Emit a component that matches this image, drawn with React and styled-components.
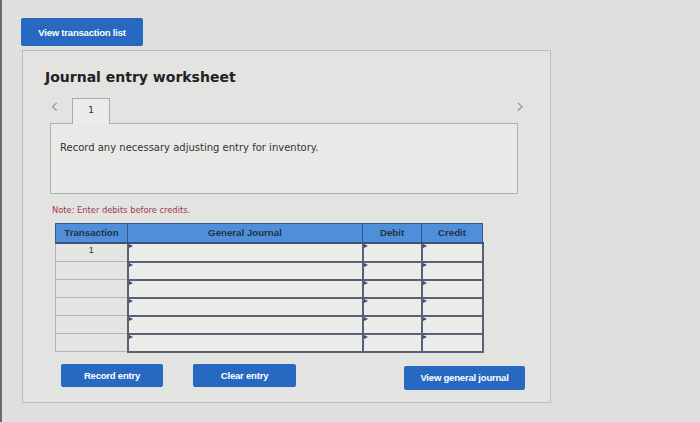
import React from 'react';
import styled, { createGlobalStyle } from 'styled-components';

const GlobalStyle = createGlobalStyle`
  html, body {
    margin: 0;
    padding: 0;
    background: #dfdfdd;
  }
  #root {
    width: 700px;
    height: 422px;
    overflow: hidden;
  }
`;

const rows = ['1', '', '', '', '', ''];

const App = () => (
  <>
    <GlobalStyle />
    <Page>
      <BlueButton $w={122} $h={28}>View transaction list</BlueButton>

      <Panel>
        <Title>Journal entry worksheet</Title>

        <TabRow>
          <TabLeft>
            <Chevron>&lsaquo;</Chevron>
            <Tab>1</Tab>
          </TabLeft>
          <Chevron>&rsaquo;</Chevron>
        </TabRow>

        <ContentBox>Record any necessary adjusting entry for inventory.</ContentBox>

        <Note>Note: Enter debits before credits.</Note>

        <Table>
          <colgroup>
            <col style={{ width: 72 }} />
            <col style={{ width: 235 }} />
            <col style={{ width: 59 }} />
            <col style={{ width: 61 }} />
          </colgroup>
          <thead>
            <tr>
              <Th>Transaction</Th>
              <Th>General Journal</Th>
              <Th>Debit</Th>
              <Th>Credit</Th>
            </tr>
          </thead>
          <tbody>
            {rows.map((r, i) => (
              <tr key={i}>
                <TransCell>{r}</TransCell>
                <InputCell><Marker /></InputCell>
                <InputCell><Marker /></InputCell>
                <InputCell><Marker /></InputCell>
              </tr>
            ))}
          </tbody>
        </Table>

        <ButtonRow>
          <BlueButton $w={102} $h={23}>Record entry</BlueButton>
          <BlueButton $w={103} $h={23}>Clear entry</BlueButton>
          <Spacer />
          <BlueButton $w={121} $h={24} $drop={2}>View general journal</BlueButton>
        </ButtonRow>
      </Panel>
    </Page>
  </>
);

const Page = styled.div`
  padding: 18px 0 0 19px;
  display: flex;
  flex-direction: column;
  align-items: flex-start;
  border-left: 2px solid #6a6a6a;
  height: 422px;
  box-sizing: border-box;
`;

const BlueButton = styled.div`
  width: ${p => p.$w}px;
  height: ${p => p.$h}px;
  margin-top: ${p => p.$drop || 0}px;
  background: #2769c1;
  border-radius: 2px;
  color: #fff;
  font-family: "Liberation Sans", Arial, sans-serif;
  font-weight: bold;
  font-size: 9.5px;
  letter-spacing: -0.2px;
  display: flex;
  align-items: center;
  justify-content: center;
  flex-shrink: 0;
`;

const Panel = styled.div`
  margin-top: 4px;
  margin-left: 1px;
  width: 529px;
  height: 353px;
  box-sizing: border-box;
  border: 1px solid #bdbdba;
  background: #e3e3e1;
  padding: 17px 0 0 27px;
  display: flex;
  flex-direction: column;
`;

const Title = styled.h1`
  margin: 0 0 0 -5px;
  font-family: "DejaVu Sans", Verdana, sans-serif;
  font-weight: bold;
  font-size: 14px;
  line-height: 18px;
  color: #222;
`;

const TabRow = styled.div`
  margin-top: 12px;
  width: 474px;
  display: flex;
  justify-content: space-between;
  align-items: flex-start;
`;

const TabLeft = styled.div`
  display: flex;
  align-items: flex-start;
  gap: 14px;
`;

const Chevron = styled.span`
  font-family: "DejaVu Sans", sans-serif;
  font-size: 22px;
  font-weight: 300;
  line-height: 14px;
  color: #8a8a8a;
  padding-top: 1px;
  width: 8px;
  text-align: center;
`;

const Tab = styled.div`
  width: 38px;
  height: 26px;
  margin-bottom: -1px;
  border: 1px solid #aaa;
  border-bottom: none;
  background: #ebebe9;
  font-family: "DejaVu Sans", sans-serif;
  font-size: 9px;
  color: #333;
  text-align: center;
  padding-top: 6px;
  box-sizing: border-box;
  position: relative;
  z-index: 1;
`;

const ContentBox = styled.div`
  width: 468px;
  height: 71px;
  box-sizing: border-box;
  border: 1px solid #b2b2b0;
  background: #e9e9e7;
  padding: 18px 0 0 9px;
  font-family: "DejaVu Sans", Verdana, sans-serif;
  font-size: 10px;
  color: #333;
`;

const Note = styled.div`
  margin: 11px 0 0 2px;
  font-family: "DejaVu Sans", Verdana, sans-serif;
  font-size: 8.3px;
  line-height: 10px;
  color: #a3384a;
`;

const Table = styled.table`
  margin: 8px 0 0 5px;
  width: 427px;
  border-collapse: collapse;
  table-layout: fixed;
`;

const Th = styled.th`
  height: 16px;
  padding: 0 0 2px;
  background: #4f8ed8;
  border: 1px solid #34598a;
  border-bottom: 2px solid #3c5478;
  font-family: "Liberation Sans", Arial, sans-serif;
  font-size: 9.7px;
  font-weight: bold;
  color: #23334a;
  vertical-align: middle;
`;

const TransCell = styled.td`
  height: 16px;
  padding: 1px 0 0;
  border: 1px solid #b3b3b1;
  background: #e4e4e2;
  font-family: "Liberation Sans", Arial, sans-serif;
  font-size: 9px;
  line-height: 10px;
  color: #333;
  text-align: center;
  vertical-align: top;
`;

const InputCell = styled.td`
  height: 16px;
  padding: 0;
  border: 2px solid #5a6170;
  background: #ebebe9;
  position: relative;
`;

const Marker = styled.span`
  position: absolute;
  top: 0;
  left: 0;
  width: 0;
  height: 0;
  border-top: 2.5px solid transparent;
  border-bottom: 2.5px solid transparent;
  border-left: 4px solid #34507c;
`;

const ButtonRow = styled.div`
  margin: 11px 0 0 11px;
  width: 464px;
  display: flex;
  align-items: flex-start;
  gap: 30px;
`;

const Spacer = styled.div`
  flex: 1;
`;

export default App;
